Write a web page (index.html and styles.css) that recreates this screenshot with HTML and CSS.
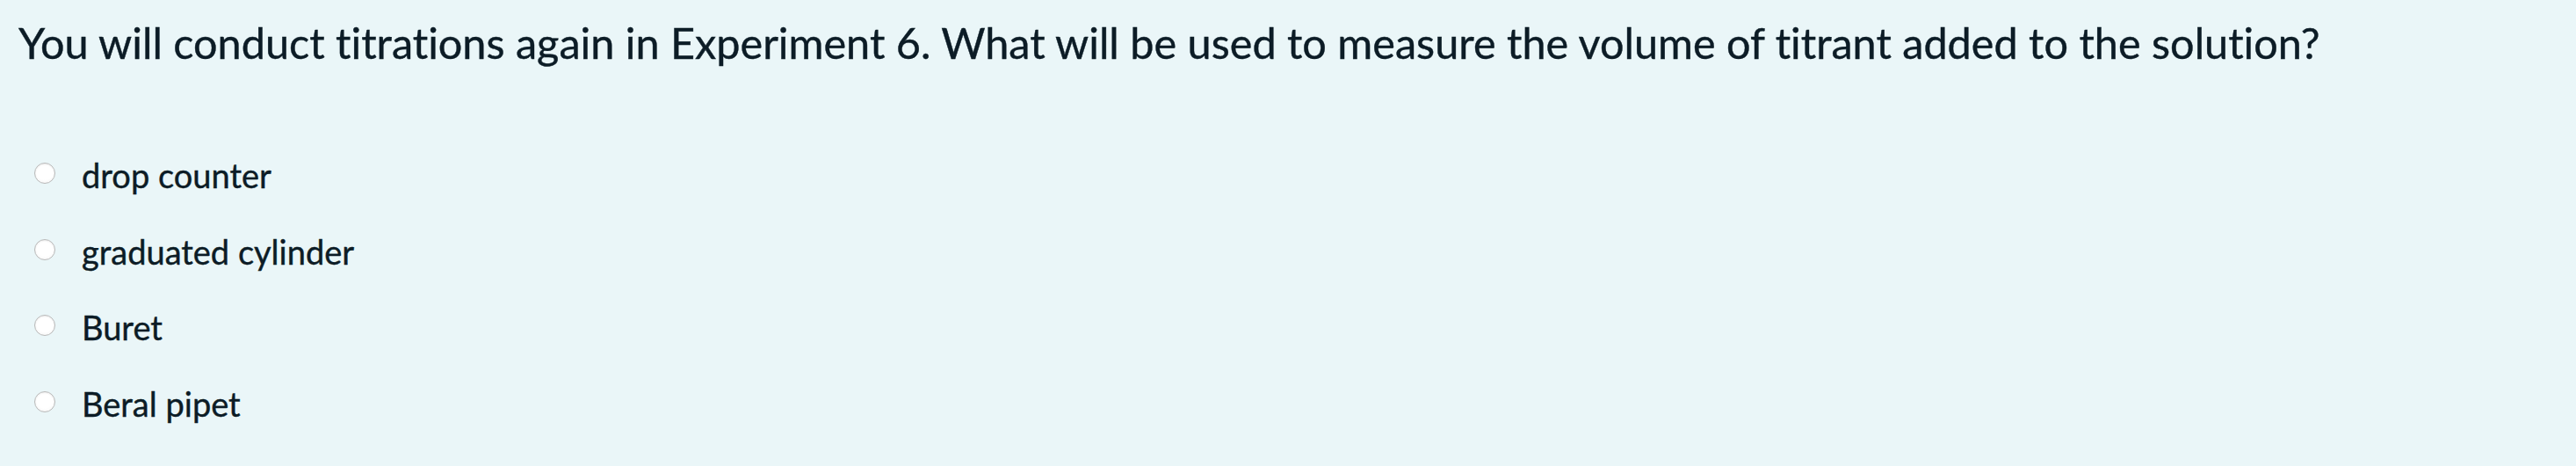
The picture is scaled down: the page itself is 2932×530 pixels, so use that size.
FILE: index.html
```html
<!DOCTYPE html>
<html lang="en">
<head>
<meta charset="utf-8">
<title>Question</title>
<link rel="stylesheet" href="styles.css">
</head>
<body>
<div class="question">
  <p class="prompt">You will conduct titrations again in Experiment 6. What will be used to measure the volume of titrant added to the solution?</p>
  <ul class="choices">
    <li class="choice"><label class="choice-label"><input type="radio" name="q" class="radio"><span class="choice-text">drop counter</span></label></li>
    <li class="choice"><label class="choice-label"><input type="radio" name="q" class="radio"><span class="choice-text">graduated cylinder</span></label></li>
    <li class="choice"><label class="choice-label"><input type="radio" name="q" class="radio"><span class="choice-text">Buret</span></label></li>
    <li class="choice"><label class="choice-label"><input type="radio" name="q" class="radio"><span class="choice-text">Beral pipet</span></label></li>
  </ul>
</div>
</body>
</html>
```
FILE: styles.css
```css
html, body {
  margin: 0;
  padding: 0;
  background: #eaf6f8;
}
body {
  width: 2932px;
  height: 530px;
  overflow: hidden;
  font-family: Lato, "Liberation Sans", sans-serif;
  font-variant-ligatures: none;
  color: #0c1c26;
  -webkit-text-stroke: 0.4px #0c1c26;
}
.question {
  padding: 19px 0 0 21px;
}
.prompt {
  margin: 0;
  font-size: 48.6px;
  line-height: 1.2;
  white-space: nowrap;
}
.choices {
  list-style: none;
  margin: 79px 0 0 0;
  padding: 0 0 0 18px;
}
.choice {
  padding: 20.55px 0;
}
.choice-label {
  display: flex;
  align-items: flex-start;
  gap: 30px;
  font-size: 38px;
  line-height: 1.2;
}
.radio {
  appearance: none;
  -webkit-appearance: none;
  margin: 8px 0 0 0;
  width: 24px;
  height: 24px;
  border-radius: 50%;
  border: 1px solid #b9b9b9;
  background: radial-gradient(circle at 50% 40%, #ffffff 55%, #f1f1f1 100%);
  box-shadow: inset 0 1px 2px rgba(0,0,0,0.08);
  box-sizing: border-box;
  flex: none;
}
```
